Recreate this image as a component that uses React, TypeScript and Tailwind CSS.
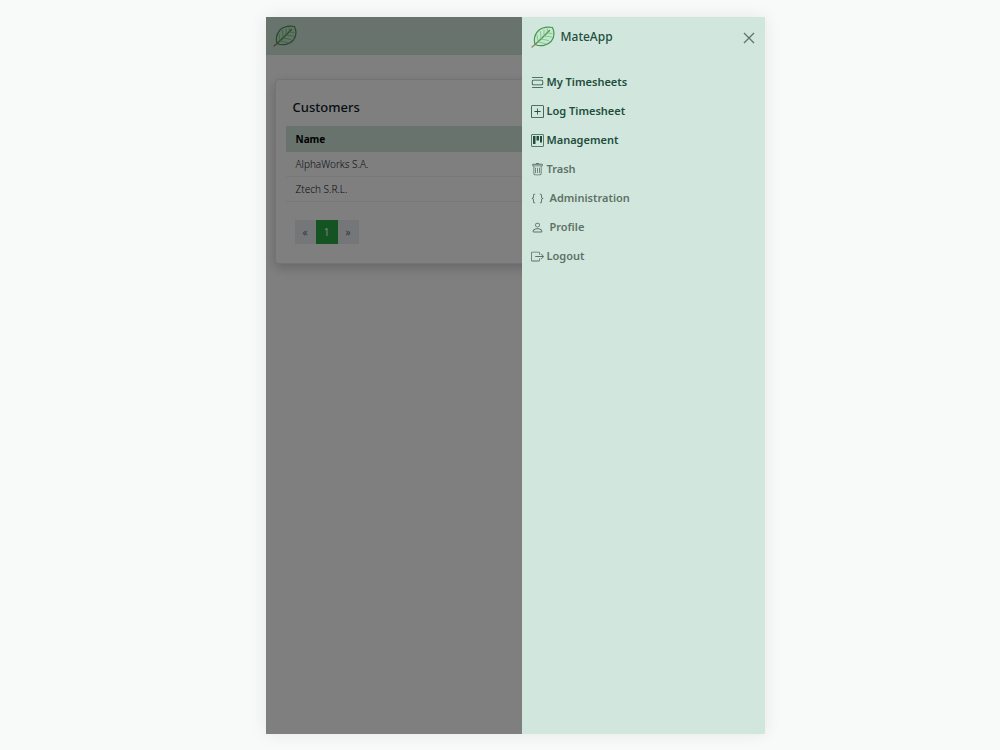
import React from 'react';
import {
  BsBoxArrowRight,
  BsBraces,
  BsPerson,
  BsPlusSquare,
  BsTrash,
  BsViewList,
} from 'react-icons/bs';

interface MenuItem {
  label: string;
  icon: React.ComponentType<{ className?: string }>;
  active?: boolean;
  spaced?: boolean;
}

const BoardIcon = ({ className }: { className?: string }) => (
  <svg viewBox="0 0 13 13" className={className} fill="none" aria-hidden="true">
    <rect x="0.500" y="0.500" width="12" height="12" rx="0.500" stroke="currentColor" strokeOpacity="0.7" />
    <path d="M2 2H4.500V10H2ZM5.500 2H8V6.500H5.500ZM9 2H11V8.500H9Z" fill="currentColor" />
  </svg>
);

const menuItems: MenuItem[] = [
  { label: 'My Timesheets', icon: BsViewList, active: true },
  { label: 'Log Timesheet', icon: BsPlusSquare, active: true },
  { label: 'Management', icon: BoardIcon, active: true },
  { label: 'Trash', icon: BsTrash },
  { label: 'Administration', icon: BsBraces, spaced: true },
  { label: 'Profile', icon: BsPerson, spaced: true },
  { label: 'Logout', icon: BsBoxArrowRight },
];

const customers = ['AlphaWorks S.A.', 'Ztech S.R.L.'];

const LeafLogo = () => (
  <svg viewBox="0 0 24 24" className="size-6 shrink-0" fill="none" strokeLinecap="round" aria-hidden="true">
    <path
      d="M4 19.500C2.500 14 4 9 7.500 5.500C11 2.500 16 1.500 21.500 2.500C23.500 7 23.500 12 20.500 16C16.500 20.500 10 22 4 19.500Z"
      fill="#c4e8cd"
      stroke="#4a9656"
      strokeWidth="1.200"
    />
    <path d="M4 19.500L10 14L18.500 5.500" stroke="#4a9656" strokeWidth="1.300" />
    <path
      d="M7 16.500L6 10M10 13.500L9.500 6.500M13 10.500L13 5M16 8L16.500 4M7.500 17L14 18.500M10.500 14L17.500 15.500M13.500 11L20.500 12M16.500 8L21 8.500"
      stroke="#6eb475"
      strokeWidth="0.700"
    />
    <path d="M1 22L4 19.500" stroke="#96846a" strokeWidth="1.400" />
  </svg>
);

const CustomersCard = () => (
  <section className="mx-[9px] mt-6 rounded border border-gray-200 bg-white px-[10px] pb-[19px] pt-4 shadow-[0_4px_12px_rgba(0,0,0,0.2)]">
    <h1 className="mb-2 px-[7px] text-[13px] font-medium leading-[22px] text-gray-900">Customers</h1>
    <table className="w-full text-left text-[10px] leading-4">
      <thead className="bg-[#d1e7dd]">
        <tr>
          <th className="px-[10px] py-[5px] font-bold text-black">Name</th>
        </tr>
      </thead>
      <tbody>
        {customers.map((name) => (
          <tr key={name} className="border-b border-[#f0f0f0]">
            <td className="px-[10px] py-1 font-light text-gray-900">{name}</td>
          </tr>
        ))}
      </tbody>
    </table>
    <nav aria-label="Pagination" className="ml-[9px] mt-[18px] flex text-[10px] leading-6">
      <button type="button" aria-label="Previous" className="w-[21px] bg-[#e9ecef] text-gray-500">«</button>
      <button type="button" aria-current="page" className="w-[22px] bg-[#28a745] text-white">1</button>
      <button type="button" aria-label="Next" className="w-[21px] bg-[#e9ecef] text-gray-500">»</button>
    </nav>
  </section>
);

const Sidebar = () => (
  <aside className="absolute inset-y-0 right-0 w-[243px] bg-[#d1e7dd] px-[9px] pt-2">
    <div className="flex items-center">
      <LeafLogo />
      <span className="ml-1.5 text-[12px] font-medium leading-6 text-[#214d3c]">MateApp</span>
      <button type="button" aria-label="Close" className="ml-auto p-px pt-[3px] text-[#60776b]">
        <svg viewBox="0 0 12 12" className="size-3" fill="none" stroke="currentColor" strokeWidth="1.400">
          <path d="M1 1L11 11M11 1L1 11" />
        </svg>
      </button>
    </div>
    <nav className="mt-[21px]">
      <ul className="space-y-[5px]">
        {menuItems.map(({ label, icon: Icon, active, spaced }) => (
          <li key={label}>
            <a
              href="#"
              className={`flex items-center text-[11px] font-semibold leading-6 ${spaced ? 'gap-1.5' : 'gap-[3px]'} ${active ? 'text-[#214d3c]' : 'text-[#5d7267]'}`}
            >
              <Icon className="size-[13px] shrink-0" />
              {label}
            </a>
          </li>
        ))}
      </ul>
    </nav>
  </aside>
);

const App = () => {
  return (
    <div className="flex min-h-screen flex-col bg-[#f8faf9] pb-4 pl-[46px] pr-4 pt-[17px] font-['Noto_Sans',sans-serif]">
      <main className="relative mx-auto flex w-full max-w-[499px] flex-1 flex-col overflow-hidden bg-white shadow-[0_0_16px_rgba(0,0,0,0.08)]">
        <header className="bg-[#d1e7dd] px-[7px] pb-[7px] pt-[7px]">
          <LeafLogo />
        </header>
        <CustomersCard />
        <div className="absolute inset-0 bg-black/50" />
        <Sidebar />
      </main>
    </div>
  );
};

export default App;
